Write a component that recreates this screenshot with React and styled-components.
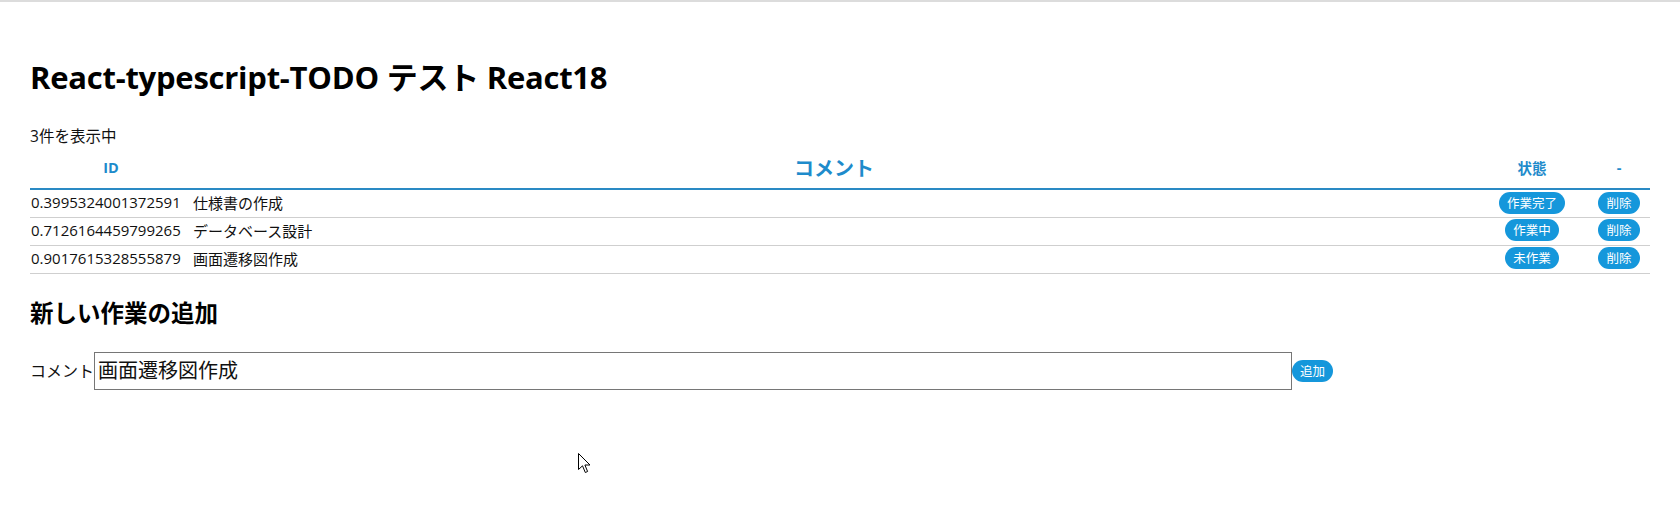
import React, { useState } from 'react';
import styled, { createGlobalStyle } from 'styled-components';

const GlobalStyle = createGlobalStyle`
  html, body {
    margin: 0;
    padding: 0;
    background: #fff;
  }
  body {
    font-family: "Open Sans", "Noto Sans CJK JP", sans-serif;
    color: #111;
    font-size: 16px;
  }
`;

const Page = styled.div`
  position: relative;
  min-height: 515px;
  border-top: 2px solid #dcdcdc;
  padding: 56px 30px 0;
  box-sizing: border-box;
`;

const Title = styled.h1`
  margin: 0;
  font-size: 31px;
  line-height: 38px;
  font-weight: 700;
  letter-spacing: -0.25px;
  color: #000;
`;

const Count = styled.p`
  margin: 29px 0 0;
  font-size: 15.5px;
  line-height: 22px;
`;

const Table = styled.table`
  width: 100%;
  border-collapse: collapse;
  table-layout: fixed;
  font-size: 15px;
`;

const HeadCell = styled.th`
  height: 41px;
  padding: 0;
  color: #1e8bcb;
  font-weight: 700;
  font-size: ${(p) => (p.$big ? '20px' : '14.5px')};
  border-bottom: 2px solid #2a8ac4;
  text-align: center;
  vertical-align: middle;
`;

const Row = styled.tr`
  height: 28px;
  border-bottom: 1px solid #cfcfcf;
`;

const Cell = styled.td`
  padding: 0 1px 2px;
  text-align: ${(p) => (p.$center ? 'center' : 'left')};
  vertical-align: middle;
  white-space: nowrap;
`;

const Pill = styled.button`
  font-family: "Noto Sans CJK JP", sans-serif;
  font-size: 12.5px;
  line-height: 22px;
  height: 22px;
  padding: 0 8px;
  border: none;
  border-radius: 11px;
  background: #1597db;
  color: #fff;
  cursor: pointer;
  vertical-align: middle;
`;

const SubTitle = styled.h2`
  margin: 23px 0 0;
  font-size: 23.5px;
  line-height: 32px;
  font-weight: 700;
  color: #000;
`;

const Form = styled.div`
  display: flex;
  align-items: center;
  margin-top: 23px;
`;

const Label = styled.label`
  font-size: 16px;
  line-height: 22px;
`;

const Input = styled.input`
  width: 1198px;
  height: 38px;
  box-sizing: border-box;
  border: 1px solid #767676;
  border-radius: 0;
  padding: 0 3px 2px;
  font-family: "Noto Sans CJK JP", sans-serif;
  font-size: 20px;
  color: #111;
  outline: none;
`;

const Cursor = styled.svg`
  position: absolute;
  left: 578px;
  top: 451px;
`;

const initialTodos = [
  { id: '0.3995324001372591', comment: '仕様書の作成', status: '作業完了' },
  { id: '0.7126164459799265', comment: 'データベース設計', status: '作業中' },
  { id: '0.9017615328555879', comment: '画面遷移図作成', status: '未作業' },
];

export default function App() {
  const [todos, setTodos] = useState(initialTodos);
  const [comment, setComment] = useState('画面遷移図作成');

  const handleDelete = (id) => {
    setTodos(todos.filter((t) => t.id !== id));
  };

  const handleAdd = () => {
    setTodos([...todos, { id: String(Math.random()), comment, status: '未作業' }]);
  };

  return (
    <Page>
      <GlobalStyle />
      <Title>React-typescript-TODO テスト React18</Title>
      <Count>{todos.length}件を表示中</Count>
      <Table>
        <colgroup>
          <col style={{ width: 162 }} />
          <col />
          <col style={{ width: 112 }} />
          <col style={{ width: 62 }} />
        </colgroup>
        <thead>
          <tr>
            <HeadCell>ID</HeadCell>
            <HeadCell $big>コメント</HeadCell>
            <HeadCell>状態</HeadCell>
            <HeadCell>-</HeadCell>
          </tr>
        </thead>
        <tbody>
          {todos.map((t) => (
            <Row key={t.id}>
              <Cell>{t.id}</Cell>
              <Cell>{t.comment}</Cell>
              <Cell $center>
                <Pill>{t.status}</Pill>
              </Cell>
              <Cell $center>
                <Pill onClick={() => handleDelete(t.id)}>削除</Pill>
              </Cell>
            </Row>
          ))}
        </tbody>
      </Table>
      <SubTitle>新しい作業の追加</SubTitle>
      <Form>
        <Label>コメント</Label>
        <Input value={comment} onChange={(e) => setComment(e.target.value)} />
        <Pill onClick={handleAdd}>追加</Pill>
      </Form>
      <Cursor width="13" height="21" viewBox="0 0 13 21">
        <path d="M0.5 0.5 L0.5 16.5 L4.5 12.8 L7.3 19.5 L9.6 18.5 L6.9 12 L12 12 Z" fill="#fff" stroke="#000" strokeWidth="1" />
      </Cursor>
    </Page>
  );
}
